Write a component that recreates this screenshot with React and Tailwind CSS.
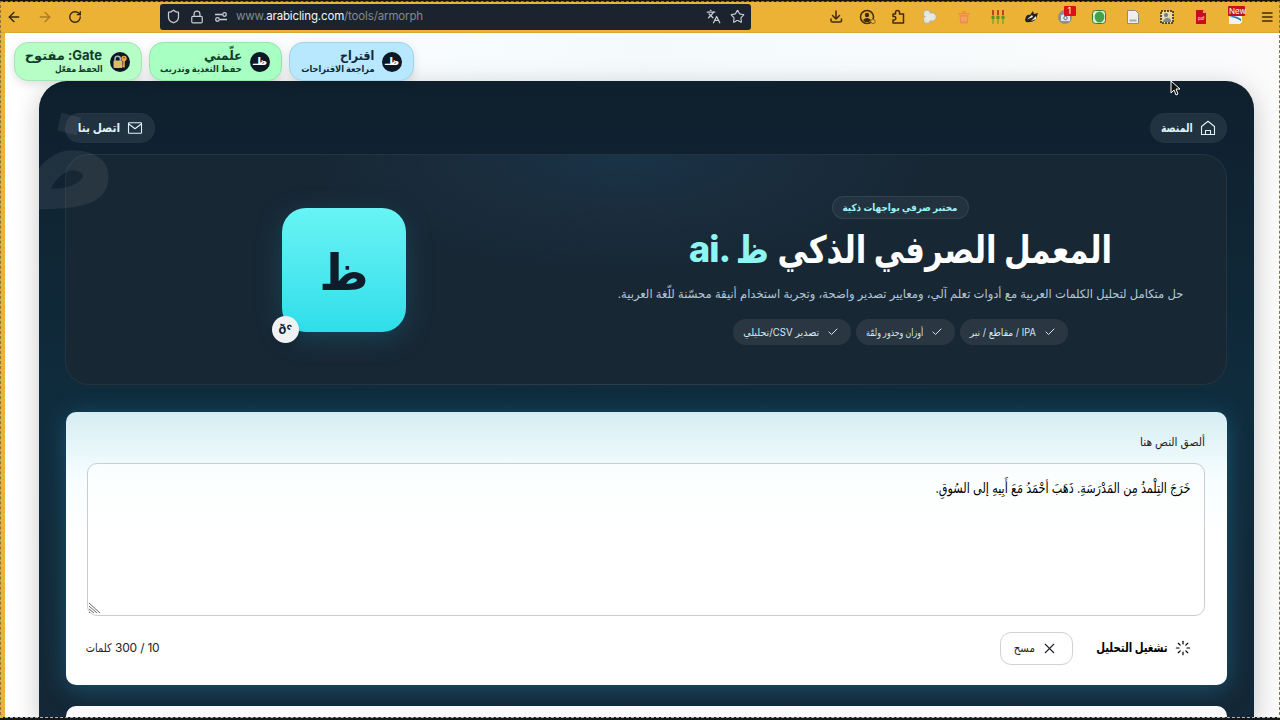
import React from 'react';
import {
  ArrowLeft,
  ArrowRight,
  Check,
  Languages,
  Loader,
  Lock,
  RotateCw,
  Shield,
  Star,
  X
} from 'lucide-react';

const modes = [
  {
    title: 'Gate: مفتوح',
    subtitle: 'الحفظ مفعّل',
    width: 'w-[128px]',
    color: 'bg-[#b6fdc6] border-[#a3e6b4] text-[#123b2b]',
    lock: true,
    titleScale: '',
    subScale: 'scale-x-[0.84]'
  },
  {
    title: 'علّمني',
    subtitle: 'حفظ التغذية وتدريب',
    width: 'w-[133px]',
    color: 'bg-[#a8ffc2] border-[#92e5ac] text-[#123b2b]',
    titleScale: 'scale-x-[0.93]',
    subScale: 'scale-x-[0.92]'
  },
  {
    title: 'اقتراح',
    subtitle: 'مراجعة الاقتراحات',
    width: 'w-[125px]',
    color: 'bg-[#b7e8fd] border-[#a0d3ea] text-[#10283c]',
    titleScale: 'scale-x-[0.85]',
    subScale: 'scale-x-[0.91]'
  }
];

const features = [
  { label: 'IPA / مقاطع / نبر', width: 'w-[108px]', scale: 'scale-x-[0.92]' },
  { label: 'أوزان وجذور ولمّة', width: 'w-[99px]', scale: 'scale-x-[0.78]' },
  { label: 'تصدير CSV/تحليلي', width: 'w-[118px]', scale: 'scale-x-[0.96]' }
];

const PadlockIcon = () => (
  <svg width="20" height="20" viewBox="0 0 20 20" className="shrink-0">
    <circle cx="10" cy="10" r="10" fill="#0d1826" />
    <path d="M5 9V7a2.700 2.700 0 0 1 5.400 0V9" fill="none" stroke="#a9b0b5" strokeWidth="1.500" />
    <rect x="3.500" y="8.500" width="9" height="7.500" rx="1" fill="#d9bd6a" />
    <circle cx="14" cy="6.500" r="2.700" fill="#f2a63a" />
    <circle cx="14" cy="5.800" r=".8" fill="#5a3b12" />
    <path d="M14 9v6.500M14 14h-1.500" stroke="#f2a63a" strokeWidth="1.600" />
  </svg>
);

const HomeIcon = () => (
  <svg width="16" height="16" viewBox="0 0 16 16" className="shrink-0" fill="none" stroke="currentColor" strokeWidth="1.100" strokeLinejoin="round">
    <path d="M1.500 6.500 8 1.300l6.500 5.200v8h-13z" />
    <path d="M5.500 14.500v-4h5v4" />
  </svg>
);

const MailIcon = () => (
  <svg width="16" height="16" viewBox="0 0 16 16" className="shrink-0" fill="none" stroke="currentColor" strokeWidth="1.100" strokeLinejoin="round">
    <rect x="1.500" y="2.800" width="13" height="10.500" rx=".6" />
    <path d="m1.800 4 6.200 4.700L14.200 4" />
  </svg>
);

const ModeButton = ({ mode }) => (
  <button dir="rtl" className={`flex h-[39px] items-center gap-2 rounded-[14px] border pr-[11px] shadow-[0_3px_10px_#0000001f] ${mode.width} ${mode.color}`}>
    {mode.lock ? (
      <PadlockIcon />
    ) : (
      <span className="flex h-5 w-5 shrink-0 items-center justify-center rounded-full bg-[#0d1826] text-[11px] leading-none font-bold text-white">ظـ</span>
    )}
    <span className="flex flex-col items-start whitespace-nowrap">
      <span className={`origin-right text-[13px] leading-[15px] font-bold ${mode.titleScale}`}>{mode.title}</span>
      <span className={`origin-right text-[9px] leading-[12px] font-semibold ${mode.subScale}`}>{mode.subtitle}</span>
    </span>
  </button>
);

const Extensions = () => (
  <svg className="ml-auto" width="455" height="30" viewBox="825 1 455 30" fill="none">
    <g stroke="#3f2d0d" strokeWidth="1.500" strokeLinecap="round" strokeLinejoin="round">
      <path d="M836 10v8M832.500 14.500l3.500 3.500 3.500-3.500M831 18v1.500q0 1.500 1.500 1.500h7.500q1.500 0 1.500-1.500V18" />
      <circle cx="867" cy="16" r="6.500" />
      <path d="M893 13h2.500v-1.500a2 2 0 0 1 4 0V13h4v9h-10.500v-3h1a1.800 1.800 0 0 0 0-3.600h-1z" />
      <path d="M1262.500 12h9.500M1262.500 16h9.500M1262.500 20h9.500" />
    </g>
    <circle cx="867" cy="14" r="2.200" fill="#3b2c12" />
    <path d="M863 19q4-4 8 0l-2 2h-4z" fill="#3b2c12" />
    <circle cx="873" cy="20.500" r="2.200" fill="#ecb134" stroke="#8a6a22" />
    <g fill="#e3e3df" stroke="#aaa489" strokeWidth=".7">
      <circle cx="927" cy="12.800" r="3.700" />
      <circle cx="932" cy="16" r="4.300" />
      <circle cx="927" cy="18.700" r="3.700" />
    </g>
    <circle cx="929" cy="16" r="3.500" fill="#e9e9e6" />
    <path d="M958.500 12h11v1.500h-11zM962 10h4v2h-4zM959.500 14h9l-.7 8.500h-7.600z" fill="#f08c50" />
    <path d="M962 15.500v5M964 15.500v5M966 15.500v5" stroke="#f8b56a" />
    <path d="M993 9v5M998 9v5M1003 9v5" stroke="#c83220" strokeWidth="1.800" />
    <path d="M993 14v9M998 14v9M1003 14v9" stroke="#8fa52a" strokeWidth="1.600" />
    <path d="M991.500 16.500h3M996.500 16.500h3M1001.500 16.500h3" stroke="#4f9a1d" strokeWidth="3" />
    <path d="M1025 19q1-6 5-5l3-4 1 3 4-1-2 6q-4 4-10 3z" fill="#26221c" />
    <path d="M1027 18.500l5-4.500 1 2zM1031 20l5-5v3z" fill="#f2efe6" />
    <circle cx="1065" cy="16" r="7" fill="#8a9096" />
    <path d="M1061 14h2l1-1.500h3l1 1.500h2v6h-9z" fill="#e3e7ea" />
    <circle cx="1065.500" cy="17" r="1.700" stroke="#667" />
    <rect x="1064" y="5" width="12" height="10" rx="1" fill="#dc1018" />
    <rect x="1092.500" y="9.500" width="13" height="13" rx="3" fill="#d9eed2" stroke="#3a7a33" />
    <ellipse cx="1099.500" cy="16" rx="4.800" ry="5.500" fill="#43a04d" />
    <path d="M1127.500 9.500h8l3 3v10h-11z" fill="#eee" stroke="#8e8b80" />
    <path d="M1129.500 19.500h7" stroke="#aaa" strokeWidth="2" />
    <rect x="1161" y="10" width="12" height="12" fill="#e8d9a5" stroke="#2d2413" strokeWidth="1.500" strokeDasharray="2 1" />
    <circle cx="1166" cy="14" r="2" fill="#6b7f8d" />
    <path d="M1163 20q4-6 8-1v2h-8z" fill="#7c8b94" />
    <path d="M1196 9h7l3 3v11h-10z" fill="#c3101b" />
    <path d="M1203 9v3h3z" fill="#ef9a9a" />
    <path d="M1229 13h13v8l-2 2h-11z" fill="#f0f3f6" />
    <path d="M1229 16q6 0 12 4v-2q-4-3-8-3z" fill="#3478aa" />
    <rect x="1228" y="5" width="17" height="10" rx="1" fill="#c4101d" />
    <g fontFamily="Inter, sans-serif" fill="#fff">
      <text x="1067.500" y="13.300" fontSize="9">1</text>
      <text x="1229" y="13.300" fontSize="8">New</text>
      <text x="1198" y="19" fontSize="4">pdf</text>
    </g>
  </svg>
);

const BrowserBar = () => (
  <div className="flex h-[33px] shrink-0 items-center border-b border-[#d9a536] bg-[#ecb236] pt-px">
    <div className="flex w-[160px] items-center gap-[15px] pl-[6px]">
      <ArrowLeft size={16} strokeWidth={2} className="text-[#33260d]" />
      <ArrowRight size={16} strokeWidth={2} className="text-[#a87c22]" />
      <RotateCw size={14} strokeWidth={2.3} className="text-[#33260d]" />
    </div>
    <div className="flex h-[26px] w-[591px] items-center rounded-[3px] bg-[#1b242e] pr-1.5 pl-1.5 text-[#c9ced3]">
      <Shield size={15} strokeWidth={2} />
      <Lock size={14} strokeWidth={2} className="ml-[9px]" />
      <svg className="ml-[10px]" width="14" height="12" viewBox="0 0 14 12" fill="none" stroke="currentColor" strokeWidth="1.300">
        <path d="M1 3.500h7M6 8.500h7" />
        <circle cx="10.500" cy="3.500" r="1.800" />
        <circle cx="3.500" cy="8.500" r="1.800" />
      </svg>
      <span className="ml-[8px] text-[11.5px] tracking-[-0.14px] text-[#83898f]">
        www.<span className="text-[#f4f5f6]">arabicling.com</span>/tools/armorph
      </span>
      <Languages size={15} strokeWidth={2} className="ml-auto" />
      <Star size={15} strokeWidth={1.8} className="ml-[9px]" />
    </div>
    <Extensions />
  </div>
);

const Navigation = () => (
  <div dir="rtl" className="flex justify-between">
    <a className="flex h-[30px] w-[77px] items-center gap-[7px] rounded-full border border-white/2 bg-white/8 pr-[10px] whitespace-nowrap text-[#dff3fc]">
      <HomeIcon />
      <span className="origin-right scale-x-[0.78] text-[12px] font-semibold">المنصة</span>
    </a>
    <a className="flex h-[30px] w-[90px] items-center gap-[7px] rounded-full border border-white/2 bg-white/8 pr-[11px] whitespace-nowrap text-[#dff3fc]">
      <MailIcon />
      <span className="origin-right scale-x-[0.88] text-[12px] font-semibold">اتصل بنا</span>
    </a>
  </div>
);

const Hero = () => (
  <section dir="rtl" className="mt-[11px] flex h-[231px] rounded-[24px] border border-white/6 bg-[#182734] bg-[radial-gradient(ellipse_at_48%_0%,#1a3347_0%,transparent_36%)] pr-[42px]">
    <div className="flex w-[567px] flex-col items-center pt-[41px] whitespace-nowrap">
      <div className="flex h-[23px] w-[137px] items-center justify-center rounded-full border border-white/8 bg-white/5 text-[10px] font-semibold text-[#9cf3f3]">
        <span className="scale-x-[0.885]">مختبر صرفي بواجهات ذكية</span>
      </div>
      <h1 className="mt-[6px] flex h-[48px] w-[423px] justify-between text-[38px] leading-[48px] font-bold text-white">
        <span className="w-[335px]">
          <span className="inline-block origin-right scale-x-[0.81]">المعمل الصرفي الذكي</span>
        </span>
        <span className="flex w-[80px] justify-between text-[#8df5f2]">
          <span className="w-[32px] origin-right scale-x-[0.84]">ظ</span>
          <span className="text-[36px] font-extrabold tracking-[-1px]">.ai</span>
        </span>
      </h1>
      <p className="mt-[11px] h-[20px] scale-x-[0.96] text-[12px] leading-[20px] text-[#b3c7d7]">
        حل متكامل لتحليل الكلمات العربية مع أدوات تعلم آلي، ومعايير تصدير واضحة، وتجربة استخدام أنيقة محسّنة للّغة العربية.
      </p>
      <div className="mt-[15px] flex gap-[5px]">
        {features.map((feature) => (
          <span key={feature.label} className={`flex h-[26px] items-center gap-2 rounded-full bg-white/8 pr-[12px] text-[10px] text-[#d6e9f3] ${feature.width}`}>
            <Check size={12} strokeWidth={2} className="shrink-0" />
            <span className={`origin-right ${feature.scale}`}>{feature.label}</span>
          </span>
        ))}
      </div>
    </div>
    <div className="mt-[53px] mr-[211px]">
      <div className="relative flex h-[124px] w-[124px] items-center justify-center rounded-[24px] bg-linear-to-b from-[#67f4f5] to-[#2cdee9] text-[50px] font-bold text-[#0e1c2b] shadow-[0_6px_26px_#1b6d8966]">
        <span className="scale-x-[0.95] pt-1">ظ</span>
        <span dir="ltr" className="absolute -bottom-[11px] -left-[10px] flex h-[27px] w-[27px] items-center justify-center rounded-full bg-[#eef2f5] text-[13px] font-bold shadow-md">ðˤ</span>
      </div>
    </div>
  </section>
);

const Editor = () => (
  <section dir="rtl" className="mt-[27px] ml-px h-[273px] rounded-[10px] bg-white bg-linear-to-b from-[#d5edf2] via-[#f7feff] via-25% to-white to-45% pt-[20px] pr-[22px] pl-[21px] text-[#1f2329] shadow-[0_4px_24px_#2a86ac70]">
    <label className="flex h-[22px] items-center text-[11.5px]">
      <span className="origin-right scale-x-[0.93]">ألصق النص هنا</span>
    </label>
    <div className="relative mt-[9px] h-[153px] rounded-[10px] border border-[#c9cdd0] bg-white/60 px-[13px] pt-[11px] text-[14px] leading-[26px] text-black">
      <span className="inline-block origin-right scale-x-[0.803] whitespace-nowrap">خَرَجَ التِلْمذُ مِن المَدْرَسَةِ. ذَهَبَ أحْمَدُ مَعَ أَبِيهِ إلى السُوقِ.</span>
      <svg className="absolute bottom-px left-px" width="12" height="12" viewBox="0 0 12 12" stroke="#555" strokeWidth=".9">
        <path d="M0 1l11 10M0 4l8 7M0 7l5 4M0 10l1 1" />
      </svg>
    </div>
    <div className="mt-[15px] flex h-[34px] items-center whitespace-nowrap">
      <button className="flex w-[132px] items-center gap-[7px] pr-[14px] text-[13px] font-bold text-black">
        <Loader size={16} strokeWidth={1.8} className="shrink-0" />
        <span className="origin-right scale-x-[0.78]">تشغيل التحليل</span>
      </button>
      <button className="flex h-[33px] w-[73px] items-center gap-[6px] rounded-[11px] border border-[#cfd2d4] pr-[14px] text-[11px]">
        <X size={17} strokeWidth={1.5} className="shrink-0" />
        <span className="origin-right scale-x-[0.92]">مسح</span>
      </button>
      <span className="mr-auto flex gap-[3px] text-[12px]">
        <span className="tracking-[-0.2px]">10 / 300</span>
        <span className="w-[25px]">
          <span className="inline-block origin-right scale-x-[0.82]">كلمات</span>
        </span>
      </span>
    </div>
  </section>
);

const App = () => {
  return (
    <div className="relative flex h-[720px] w-[1280px] flex-col overflow-hidden bg-[#f8fafc] font-['Inter','DejaVu_Sans',sans-serif]">
      <BrowserBar />
      <div className="flex flex-1 flex-col border-l-[5px] border-[#e9b33c] bg-linear-to-r from-white via-[#f4fafc] to-[#fbfbfc]">
        <div className="relative z-10 flex h-[48px] gap-[7px] pt-[9px] pl-[9px]">
          {modes.map((mode) => (
            <ModeButton key={mode.title} mode={mode} />
          ))}
        </div>
        <main className="relative ml-[34px] h-[639px] w-[1215px] rounded-t-[28px] bg-linear-to-b from-[#0f1f2d] via-[#0f2c3d] via-50% to-[#142736] pt-[32px] pr-[27px] pl-[26px] shadow-[0_6px_26px_#00000038]">
          {/* Decorative letter clipped by the left edge */}
          <div className="pointer-events-none absolute top-0 left-0 h-[200px] w-[110px] overflow-hidden">
            <span dir="rtl" className="absolute -top-[5px] right-[31px] origin-right scale-y-[1.1] -rotate-3 text-[144px] leading-none font-bold text-white/7">صـ</span>
            <span className="absolute top-[34px] left-[20px] h-[18px] w-[20px] rotate-[14deg] bg-white/7" />
          </div>
          <Navigation />
          <Hero />
          <Editor />
          <section className="mt-[21px] ml-px h-[13px] rounded-t-[10px] bg-[#fcf9fb]" />
        </main>
      </div>
      {/* Selection frame around the window */}
      <div className="pointer-events-none absolute inset-0 z-20 border-x border-dashed border-[#8a7440]" />
      <div className="pointer-events-none absolute inset-x-0 top-0 z-20 h-[2px] border-b border-dashed border-[#9a7434] bg-[#1c120a]" />
      <div className="pointer-events-none absolute inset-x-0 bottom-0 z-20 h-[3px] border-t border-dashed border-[#b5b5b5] bg-[#15181b]" />
      <svg className="absolute top-[80px] left-[1170px]" width="10" height="16" viewBox="0 0 10 16">
        <path d="M1 1v12l3-3 2 5 2-1-2-5h4z" fill="#111" stroke="#fff" />
      </svg>
    </div>
  );
};

export default App;
